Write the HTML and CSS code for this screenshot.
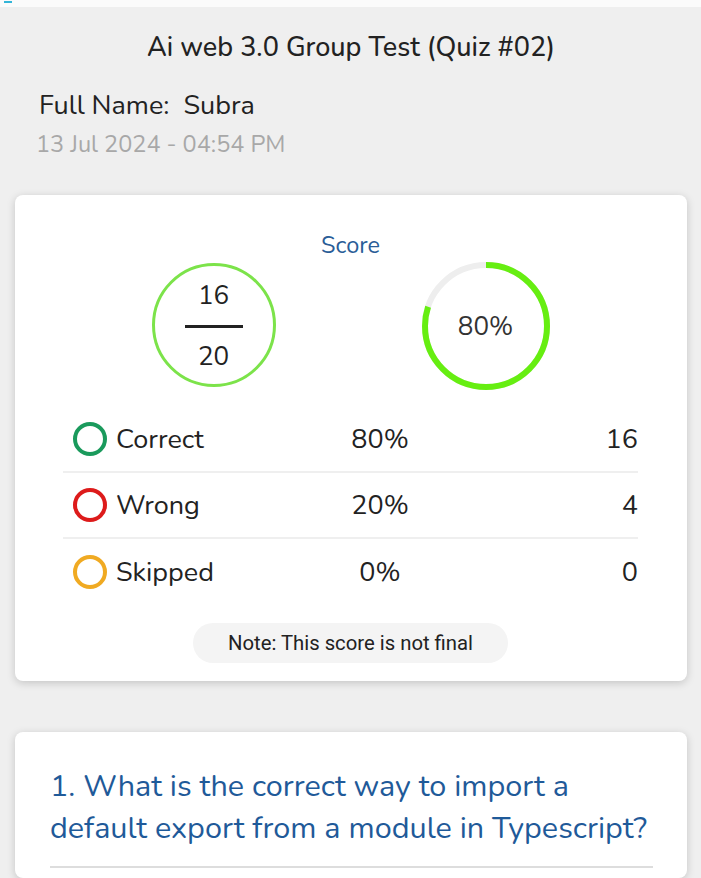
FILE: index.html
```html
<!DOCTYPE html>
<html>
<head>
<meta charset="utf-8">
<link rel="stylesheet" href="styles.css">
</head>
<body>
<div class="topbar"><span class="blip"></span></div>
<div class="page">
  <h1 class="title">Ai web 3.0 Group Test (Quiz #02)</h1>
  <div class="name">Full Name:&nbsp; Subra</div>
  <div class="date">13 Jul 2024 - 04:54 PM</div>

  <section class="card score-card">
    <div class="score-label">Score</div>
    <div class="charts">
      <div class="fraction">
        <span class="num">16</span>
        <span class="bar"></span>
        <span class="num">20</span>
      </div>
      <div class="ring">
        <svg width="128" height="128" viewBox="0 0 128 128">
          <circle cx="64" cy="64" r="61" fill="none" stroke="#eeeeee" stroke-width="6"/>
          <circle cx="64" cy="64" r="61" fill="none" stroke="#66ee11" stroke-width="6" stroke-dasharray="306.6 383.3" transform="rotate(-90 64 64)"/>
        </svg>
        <span class="ring-text">80%</span>
      </div>
    </div>
    <div class="rows">
      <div class="row">
        <div class="row-label"><span class="dot dot-green"></span>Correct</div>
        <div class="row-pct">80%</div>
        <div class="row-count">16</div>
      </div>
      <div class="row">
        <div class="row-label"><span class="dot dot-red"></span>Wrong</div>
        <div class="row-pct">20%</div>
        <div class="row-count">4</div>
      </div>
      <div class="row">
        <div class="row-label"><span class="dot dot-orange"></span>Skipped</div>
        <div class="row-pct">0%</div>
        <div class="row-count">0</div>
      </div>
    </div>
    <div class="note">Note: This score is not final</div>
  </section>

  <section class="card question-card">
    <div class="question">1. What is the correct way to import a default export from a module in Typescript?</div>
    <div class="q-sep"></div>
  </section>
</div>
</body>
</html>
```

FILE: styles.css
```css
* { box-sizing: border-box; }
html, body { margin: 0; padding: 0; }
body {
  background: #efefef;
  font-family: "Nunito", "Lato", "Open Sans", sans-serif;
  color: #222;
  width: 701px;
  height: 878px;
  overflow: hidden;
}
.topbar {
  height: 7px;
  background: #fbfbfb;
  position: relative;
}
.blip {
  position: absolute;
  left: 4px;
  top: 0;
  width: 8px;
  height: 3px;
  border-bottom: 2px solid #33b5d8;
}
.page {
  padding: 0 14px 0 15px;
}
.title {
  margin: 0;
  padding-top: 24px;
  text-align: center;
  font-size: 27px;
  font-weight: 500;
  line-height: 34px;
  color: #222;
}
.name {
  margin-top: 25px;
  padding-left: 24px;
  font-size: 27px;
  line-height: 32px;
  color: #222;
}
.date {
  margin-top: 8px;
  padding-left: 21px;
  font-size: 23.5px;
  line-height: 28px;
  color: #a8a8a8;
}
.card {
  background: #fff;
  border-radius: 8px;
  box-shadow: 0 2px 8px rgba(0,0,0,0.18);
}
.score-card {
  margin-top: 37px;
  padding: 36px 49px 18px 48px;
}
.score-label {
  text-align: center;
  color: #2a5d97;
  font-size: 23.5px;
  line-height: 28px;
}
.charts {
  display: flex;
  justify-content: center;
  align-items: flex-start;
  gap: 146px;
  margin-top: 3px;
}
.fraction {
  margin-top: 1px;
  width: 124px;
  height: 124px;
  border: 3px solid #7ce34a;
  border-radius: 50%;
  display: flex;
  flex-direction: column;
  align-items: center;
  justify-content: center;
  font-size: 26px;
  line-height: 30px;
  color: #222;
  padding-top: 2px;
}
.fraction .num { display: block; }
.fraction .bar {
  display: block;
  width: 58px;
  height: 3px;
  background: #222;
  margin: 14px 0 14px;
}
.ring {
  position: relative;
  width: 128px;
  height: 128px;
}
.ring svg { display: block; }
.ring-text {
  position: absolute;
  inset: 0;
  display: flex;
  align-items: center;
  justify-content: center;
  font-size: 26px;
  color: #333;
}
.rows {
  margin-top: 17px;
}
.row {
  display: grid;
  grid-template-columns: 1fr 1fr 1fr;
  align-items: center;
  height: 66px;
  border-bottom: 2px solid #efefef;
  font-size: 27px;
  color: #222;
}
.row:last-child { border-bottom: none; }
.row-label {
  display: flex;
  align-items: center;
  gap: 9px;
  padding-left: 10px;
}
.dot {
  display: inline-block;
  width: 34px;
  height: 34px;
  border-radius: 50%;
  border: 4px solid;
}
.dot-green { border-color: #1a9a5c; }
.dot-red { border-color: #dd1b1b; }
.dot-orange { border-color: #f0aa22; }
.row-pct { text-align: center; padding-left: 59px; }
.row-count { text-align: right; }
.note {
  width: 315px;
  height: 40px;
  margin: 18px auto 0;
  background: #f4f4f4;
  border-radius: 20px;
  display: flex;
  align-items: center;
  justify-content: center;
  font-family: "Roboto", sans-serif;
  font-size: 20.3px;
  color: #222;
}
.question-card {
  margin-top: 51px;
  height: 146px;
  padding: 33px 34px 0 35px;
}
.question {
  font-size: 30.6px;
  line-height: 42px;
  color: #1f5a99;
}
.q-sep {
  margin-top: 17px;
  height: 2px;
  background: #ddd;
}
```
